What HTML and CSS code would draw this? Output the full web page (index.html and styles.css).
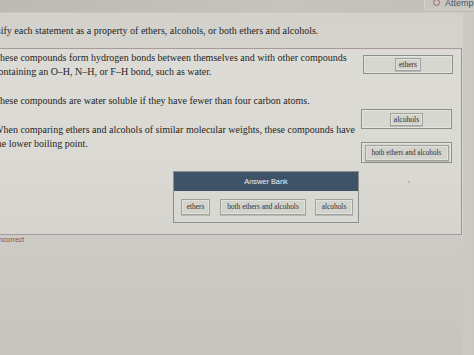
FILE: index.html
```html
<!DOCTYPE html>
<html>
<head>
<meta charset="utf-8">
<link rel="stylesheet" href="styles.css">
</head>
<body>
<div class="topbar">
  <div class="attempt"><span class="ico"></span><span class="att-text">Attempt</span></div>
</div>
<div class="main">
  <p class="instr">Classify each statement as a property of ethers, alcohols, or both ethers and alcohols.</p>
  <div class="box">
    <div class="qa">
      <div class="statements">
        <p class="st st1">These compounds form hydrogen bonds between themselves and with other compounds<br>containing an O&ndash;H, N&ndash;H, or F&ndash;H bond, such as water.</p>
        <p class="st st2">These compounds are water soluble if they have fewer than four carbon atoms.</p>
        <p class="st st3">When comparing ethers and alcohols of similar molecular weights, these compounds have<br>the lower boiling point.</p>
      </div>
      <div class="zones">
        <div class="zone z1"><span class="chip small">ethers</span></div>
        <div class="zone z2"><span class="chip small">alcohols</span></div>
        <div class="zone z3"><span class="chip small wide">both ethers and alcohols</span></div>
      </div>
      <span class="dot"></span>
    </div>
    <div class="bank">
      <div class="bank-head">Answer Bank</div>
      <div class="bank-body">
        <span class="chip big c1">ethers</span>
        <span class="chip big c2">both ethers and alcohols</span>
        <span class="chip big c3">alcohols</span>
      </div>
    </div>
  </div>
  <p class="incorrect">Incorrect</p>
</div>
</body>
</html>
```
FILE: styles.css
```css
html, body {
  margin: 0;
  padding: 0;
}
body {
  width: 474px;
  height: 355px;
  overflow: hidden;
  font-family: "Liberation Serif", "Times New Roman", serif;
  color: #252523;
  background: linear-gradient(90deg, #c3c2bc 0%, #cfcdc7 45%, #d3d1cb 75%, #c9c8c2 100%);
}
.topbar {
  height: 12px;
  background: linear-gradient(90deg, #bbbab4, #c4c3bd 60%, #c0bfb9);
  display: flex;
  justify-content: flex-end;
  border-bottom: 1px solid #c9c8c2;
}
.attempt {
  width: 50px;
  height: 10px;
  border-left: 1px solid #d3d2cc;
  border-bottom: 1px solid #d3d2cc;
  background: #c7c6c0;
  display: flex;
  align-items: flex-start;
  gap: 5px;
  padding-left: 8px;
  box-sizing: border-box;
  overflow: hidden;
}
.ico {
  width: 7px;
  height: 7px;
  margin-top: -1px;
  border: 1.3px solid #b25e62;
  border-radius: 50%;
  box-sizing: border-box;
  flex: none;
}
.att-text {
  font-family: "Liberation Sans", Arial, sans-serif;
  font-size: 9px;
  line-height: 7px;
  color: #4a5668;
  white-space: nowrap;
}
.main {
  margin-left: -21px;
  width: 484px;
  background: linear-gradient(180deg, #d3d1cb 0%, #dad8d2 40%, #d8d6d0 70%, #cfcdc7 100%);
}
.instr {
  margin: 0;
  padding-top: 11px;
  height: 24px;
  font-size: 10px;
  line-height: 14px;
  white-space: nowrap;
}
.box {
  margin-left: 7px;
  width: 476px;
  box-sizing: border-box;
  border-top: 1px solid #a8999a;
  border-right: 1px solid #9c9894;
  border-bottom: 1px solid #a8999a;
  padding-bottom: 11px;
  background: linear-gradient(180deg, #dddbd5, #dbd9d3 60%, #d6d4ce);
}
.qa {
  display: flex;
  position: relative;
}
.statements {
  width: 370px;
  padding-left: 8px;
  padding-top: 2px;
}
.st {
  margin: 0;
  font-size: 10px;
  line-height: 14px;
  white-space: nowrap;
}
.st2 { margin-top: 15px; }
.st3 { margin-top: 15px; }
.zones {
  display: flex;
  flex-direction: column;
  padding-top: 6px;
  margin-left: -1px;
}
.zone {
  width: 90px;
  height: 19px;
  box-sizing: border-box;
  border: 1px solid #8f8f89;
  box-shadow: inset 0 0 0 1px #e4e4de;
  background: #d7d7d1;
  display: flex;
  align-items: center;
  justify-content: center;
}
.z2 { margin-top: 35px; margin-left: -2px; width: 91px; height: 20px; }
.z3 { margin-top: 13px; margin-left: -2px; width: 91px; height: 21px; }
.chip {
  display: inline-flex;
  align-items: center;
  justify-content: center;
  box-sizing: border-box;
  background: #d3d3cd;
  border: 1px solid #a2a29c;
  box-shadow: 0 1px 0 #b9b9b3, inset 0 0 0 1px #e2e2dc;
  color: #302f2c;
  white-space: nowrap;
}
.chip.small {
  font-size: 7.6px;
  height: 13px;
  padding: 0 3px;
}
.chip.small.wide {
  width: 84px;
  height: 16px;
  font-size: 7.2px;
}
.dot {
  position: absolute;
  left: 422px;
  top: 132px;
  width: 2px;
  height: 2px;
  border-radius: 50%;
  background: #aaa8a2;
}
.bank {
  margin-top: 8px;
  margin-left: 187px;
  width: 186px;
  border: 1px solid #8e8e8a;
  box-sizing: border-box;
}
.bank-head {
  height: 19px;
  background: #3e5368;
  color: #eef0f2;
  font-family: "Liberation Sans", Arial, sans-serif;
  font-size: 7.4px;
  display: flex;
  align-items: center;
  justify-content: center;
}
.bank-body {
  height: 31px;
  background: #d9d8d2;
  display: flex;
  align-items: center;
  padding-left: 7px;
}
.chip.big {
  font-size: 7.4px;
  height: 16px;
}
.c1 { width: 29px; }
.c2 { width: 86px; margin-left: 10px; }
.c3 { width: 38px; margin-left: 9px; }
.incorrect {
  margin: 0;
  padding-left: 18px;
  font-family: "Liberation Sans", Arial, sans-serif;
  font-size: 7px;
  line-height: 10px;
  color: #9a4a44;
  height: 125px;
  background: linear-gradient(180deg, #cdcbc5, #c6c4be);
}
```
